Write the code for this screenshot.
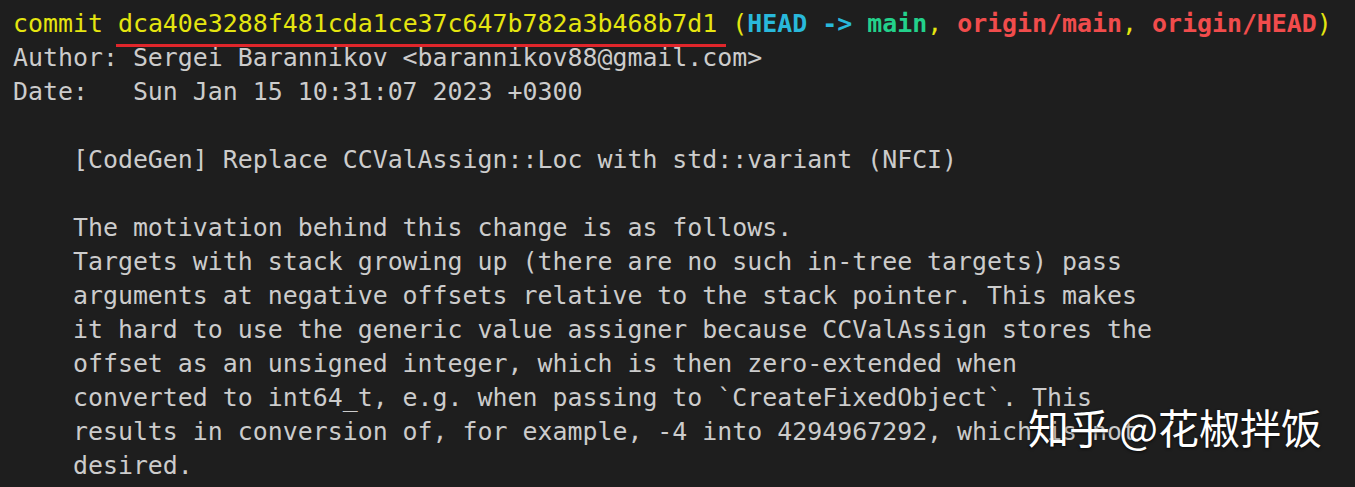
import React from 'react';

const body = [
  '',
  '    [CodeGen] Replace CCValAssign::Loc with std::variant (NFCI)',
  '',
  '    The motivation behind this change is as follows.',
  '    Targets with stack growing up (there are no such in-tree targets) pass',
  '    arguments at negative offsets relative to the stack pointer. This makes',
  '    it hard to use the generic value assigner because CCValAssign stores the',
  '    offset as an unsigned integer, which is then zero-extended when',
  '    converted to int64_t, e.g. when passing to `CreateFixedObject`. This',
  '    results in conversion of, for example, -4 into 4294967292, which is not',
  '    desired.',
];

export default function App() {
  return (
    <div
      className="relative w-[1355px] h-[487px] overflow-hidden bg-[#1e1e1e] pl-[13px] pt-[7px] text-[24.9px] leading-[34px] text-[#cccccc] whitespace-pre"
      style={{ fontFamily: '"DejaVu Sans Mono", "Liberation Mono", monospace' }}
    >
      <div className="text-[#e5e510]">
        <span>commit </span>
        <span className="relative">
          dca40e3288f481cda1ce37c647b782a3b468b7d1
          <span className="absolute left-[-2px] right-[-9px] top-[35px] h-[3px] bg-[#e0262b]" />
        </span>
        <span> (</span>
        <span className="font-bold text-[#29b8db]">HEAD -&gt; </span>
        <span className="font-bold text-[#23d18b]">main</span>
        <span>, </span>
        <span className="font-bold text-[#f14c4c]">origin/main</span>
        <span>, </span>
        <span className="font-bold text-[#f14c4c]">origin/HEAD</span>
        <span>)</span>
      </div>
      <div>Author: Sergei Barannikov &lt;barannikov88@gmail.com&gt;</div>
      <div>Date:   Sun Jan 15 10:31:07 2023 +0300</div>
      {body.map((line, i) => (
        <div key={i} className="h-[34px]">
          {line}
        </div>
      ))}

      <div
        className="absolute left-[1028px] top-[402px] text-[41px] leading-[48px] text-white whitespace-nowrap [text-shadow:0_1px_3px_rgba(0,0,0,0.8)]"
        style={{ fontFamily: '"Noto Sans CJK SC", "Noto Sans", sans-serif' }}
      >
        知乎 @花椒拌饭
      </div>
    </div>
  );
}
